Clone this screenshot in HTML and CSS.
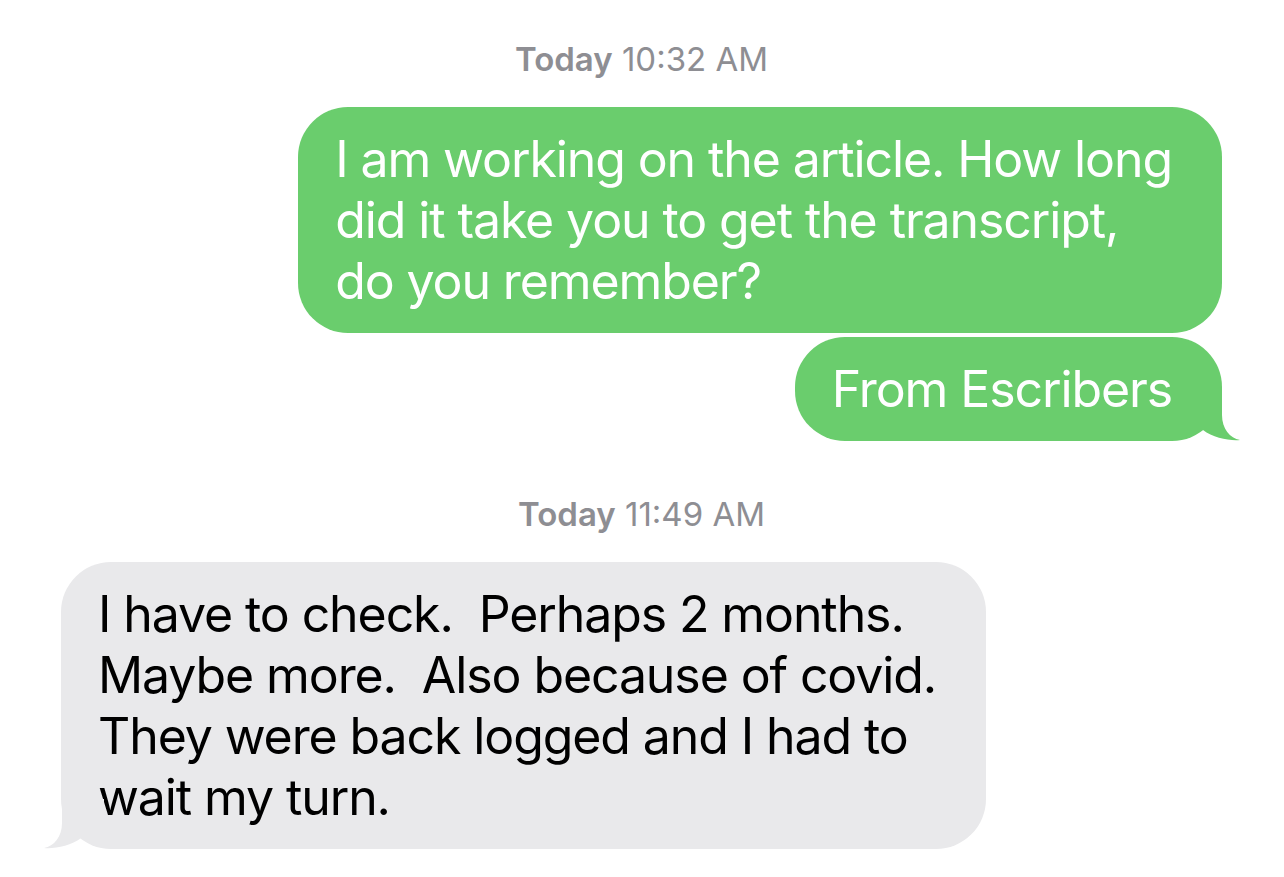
FILE: index.html
```html
<!DOCTYPE html>
<html lang="en">
<head>
<meta charset="utf-8">
<title>Messages</title>
<link rel="stylesheet" href="styles.css">
</head>
<body>
<main class="thread">
  <div class="stamp"><b>Today</b> 10:32 AM</div>
  <div class="row row-out">
    <div class="bubble out">I am working on the article. How long<br>did it take you to get the transcript,<br>do you remember?</div>
  </div>
  <div class="row row-out row-tight">
    <div class="bubble out">From Escribers<svg class="tail tail-out" width="60" height="50" viewBox="0 0 60 50"><path d="M0 0 L42 0 L42 24 C42 38 50 47 60 49 C50 50 33 47 23 39 L0 39 Z"/></svg></div>
  </div>
  <div class="stamp stamp-gap"><b>Today</b> 11:49 AM</div>
  <div class="row row-in">
    <div class="bubble in">I have to check.&nbsp; Perhaps 2 months.<br>Maybe more.&nbsp; Also because of covid.<br>They were back logged and I had to<br>wait my turn.<svg class="tail tail-in" width="60" height="50" viewBox="0 0 60 50"><path d="M0 0 L42 0 L42 24 C42 38 50 47 60 49 C50 50 33 47 23 39 L0 39 Z"/></svg></div>
  </div>
</main>
</body>
</html>
```

FILE: styles.css
```css
html, body {
  margin: 0;
  padding: 0;
  background: #ffffff;
}

body {
  font-family: Inter, "Noto Sans", "Liberation Sans", sans-serif;
}

.thread {
  display: flex;
  flex-direction: column;
  padding: 39px 62px 0 61px;
}

.stamp {
  text-align: center;
  font-size: 33px;
  line-height: 40px;
  color: #8e8e93;
  font-weight: 400;
}

.stamp b {
  font-weight: 600;
}

.stamp-gap {
  margin-top: 53px;
}

.row {
  display: flex;
  margin-top: 28px;
}

.row-tight {
  margin-top: 4px;
}

.row-out {
  justify-content: flex-end;
}

.row-in {
  justify-content: flex-start;
}

.bubble {
  position: relative;
  font-size: 50px;
  line-height: 61px;
  padding: 22px 50px 21px 37px;
  border-radius: 50px;
  white-space: nowrap;
  letter-spacing: -1.1px;
}

.out {
  background: #6acd6d;
  color: #ffffff;
}

.in {
  background: #e9e9eb;
  color: #000000;
}

.tail {
  position: absolute;
  bottom: 0;
}

.tail-out {
  right: -18px;
  fill: #6acd6d;
}

.tail-in {
  left: -17px;
  fill: #e9e9eb;
  transform: scaleX(-1);
}
```
